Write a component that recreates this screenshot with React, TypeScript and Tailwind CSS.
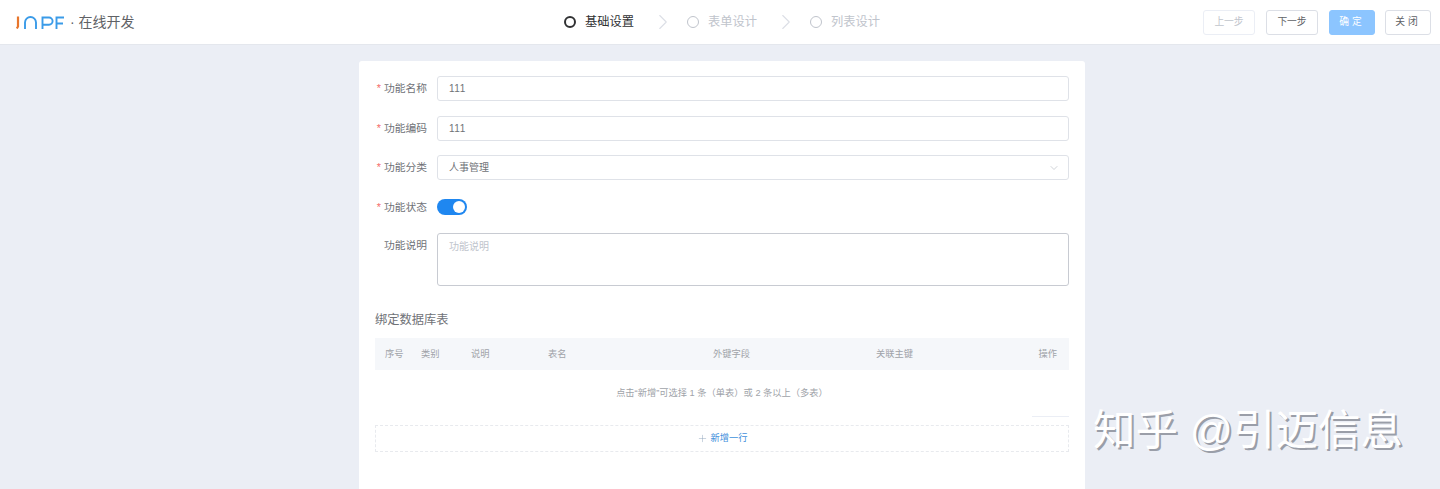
import React from "react";
import { ChevronDown, ChevronRight, Plus } from "lucide-react";

const Step = ({ label, active }: { label: string; active?: boolean }) => (
  <div className="flex items-center gap-[9px]">
    <span className={`box-border w-[12px] h-[12px] rounded-full ${active ? "border-2 border-[#303133]" : "border-[1.5px] border-[#c0c4cc]"}`} />
    <span className={`text-[12.25px] leading-none pt-[1px] ${active ? "text-[#303133]" : "text-[#c0c4cc]"}`}>{label}</span>
  </div>
);

const Btn = ({ children, cls }: { children: React.ReactNode; cls: string }) => (
  <div className={`box-border h-[25px] flex items-center justify-center rounded-[3px] border text-[9.75px] ${cls}`}>{children}</div>
);

const Field = ({ label, required = true, children, top, cls = "" }: { label: string; required?: boolean; children: React.ReactNode; top?: boolean; cls?: string }) => (
  <div className={`flex ${top ? "items-start" : "items-center"} min-h-[25px] ${cls}`}>
    <div className={`w-[52px] shrink-0 whitespace-nowrap flex justify-end text-[10.75px] text-[#6f7277] leading-none ${top ? "pt-[7px]" : ""}`}>
      {required && <span className="text-[#f56c6c] mr-[3px]">*</span>}
      {label}
    </div>
    <div className="ml-[10px] flex-1">{children}</div>
  </div>
);

const Input = ({ value, icon, wide }: { value: string; icon?: boolean; wide?: boolean }) => (
  <div className="box-border h-[25px] w-[632px] rounded-[3px] border border-[#dfe2e8] bg-white flex items-center justify-between pl-[11px] pr-[8px] text-[10px] text-[#6f7277]">
    <span className={wide ? "tracking-[0.5px]" : ""}>{value}</span>
    {icon && <ChevronDown className="w-[12px] h-[12px] text-[#b4b8c0]" strokeWidth={1.25} />}
  </div>
);

export default function App() {
  return (
    <div className="w-[1440px] h-[489px] overflow-hidden bg-[#ebeef5] relative" style={{ fontFamily: '"Liberation Sans","Noto Sans CJK SC",sans-serif' }}>
      <header className="h-[45px] bg-white border-b border-[#e4e7ed] flex items-center relative">
        <div className="flex items-center pl-[16px] w-[300px]">
          <svg width="48" height="13" viewBox="0 0 48 13" fill="none" className="mr-[6px]">
            <path d="M2 0.5V10.5L0.8 12.5" stroke="#e8762c" strokeWidth="2.2" />
            <path d="M9 13V6.5a5.5 5.5 0 0 1 11 0V13" stroke="#3a9be8" strokeWidth="1.9" />
            <path d="M26.5 13V1.5h6.5a3.6 3.6 0 0 1 0 7.2h-6.5" stroke="#3a9be8" strokeWidth="1.9" />
            <path d="M40.5 13V1.5H48M40.5 7.5h6.5" stroke="#3a9be8" strokeWidth="1.9" />
          </svg>
          <span className="text-[14px] text-[#606266] leading-none">· 在线开发</span>
        </div>
        <div className="absolute left-[564px] top-0 h-[44px] flex items-center">
          <Step label="基础设置" active />
          <ChevronRight className="w-[26px] h-[26px] text-[#dcdfe6] ml-[16px] mr-[11px]" strokeWidth={1} />
          <Step label="表单设计" />
          <ChevronRight className="w-[26px] h-[26px] text-[#dcdfe6] ml-[16px] mr-[11px]" strokeWidth={1} />
          <Step label="列表设计" />
        </div>
        <div className="ml-auto pr-[9px] flex items-center">
          <Btn cls="w-[52px] mr-[11px] border-[#ebeef5] text-[#c0c4cc]">上一步</Btn>
          <Btn cls="w-[52px] mr-[11px] border-[#dcdfe6] text-[#606266]">下一步</Btn>
          <Btn cls="w-[46px] mr-[10px] border-[#8cc5ff] bg-[#8cc5ff] text-white tracking-[3px]">确定</Btn>
          <Btn cls="w-[46px] border-[#dcdfe6] text-[#606266] tracking-[3px]">关闭</Btn>
        </div>
      </header>

      <main className="box-border ml-[359px] mt-[16px] w-[726px] h-[440px] bg-white rounded-t-[3px] px-[16px] pt-[15px]">
        <div className="flex flex-col gap-[14.5px]">
          <Field label="功能名称"><Input value="111" wide /></Field>
          <Field label="功能编码"><Input value="111" wide /></Field>
          <Field label="功能分类"><Input value="人事管理" icon /></Field>
          <Field label="功能状态">
            <div className="relative w-[30px] h-[16px] rounded-full bg-[#1f87f0]">
              <span className="absolute right-[2px] top-[2px] w-[12px] h-[12px] rounded-full bg-white" />
            </div>
          </Field>
          <Field label="功能说明" required={false} top cls="-mt-[1px]">
            <div className="box-border h-[53px] w-[632px] rounded-[3px] border border-[#c8cbd2] pl-[11px] pt-[5px] text-[10px] text-[#c0c4cc]">功能说明</div>
          </Field>
        </div>

        <h3 className="mt-[28px] text-[12.25px] leading-none font-normal text-[#6f7277]">绑定数据库表</h3>

        <div className="mt-[12px] w-[694px]">
          <div className="h-[32px] bg-[#f5f7fa] flex items-center pt-[1px] text-[9.25px] text-[#a0a3a9]">
            <span className="w-[46px] pl-[10px]">序号</span>
            <span className="w-[50px]">类别</span>
            <span className="w-[77px]">说明</span>
            <span className="w-[165px]">表名</span>
            <span className="w-[163px]">外键字段</span>
            <span className="flex-1">关联主键</span>
            <span className="pr-[12px]">操作</span>
          </div>
          <div className="h-[46px] flex items-center justify-center pt-[1px] text-[9.25px] text-[#a0a3a9]">点击“新增”可选择 1 条（单表）或 2 条以上（多表）</div>
          <div className="ml-auto w-[37px] h-px bg-[#ebeef5]" />
          <div className="box-border mt-[8px] h-[27px] border border-dashed border-[#e8eaee] flex items-center justify-center gap-[3px] text-[9.25px] text-[#3f8fdc]">
            <Plus className="w-[11px] h-[11px] text-[#8aa0b8]" strokeWidth={1} />
            <span>新增一行</span>
          </div>
        </div>
      </main>

      <div className="absolute left-[1093px] top-[403px] text-[42.5px] leading-[56px] whitespace-nowrap text-white [text-shadow:2px_2px_0_#9a9ea8]">知乎 @引迈信息</div>
    </div>
  );
}
